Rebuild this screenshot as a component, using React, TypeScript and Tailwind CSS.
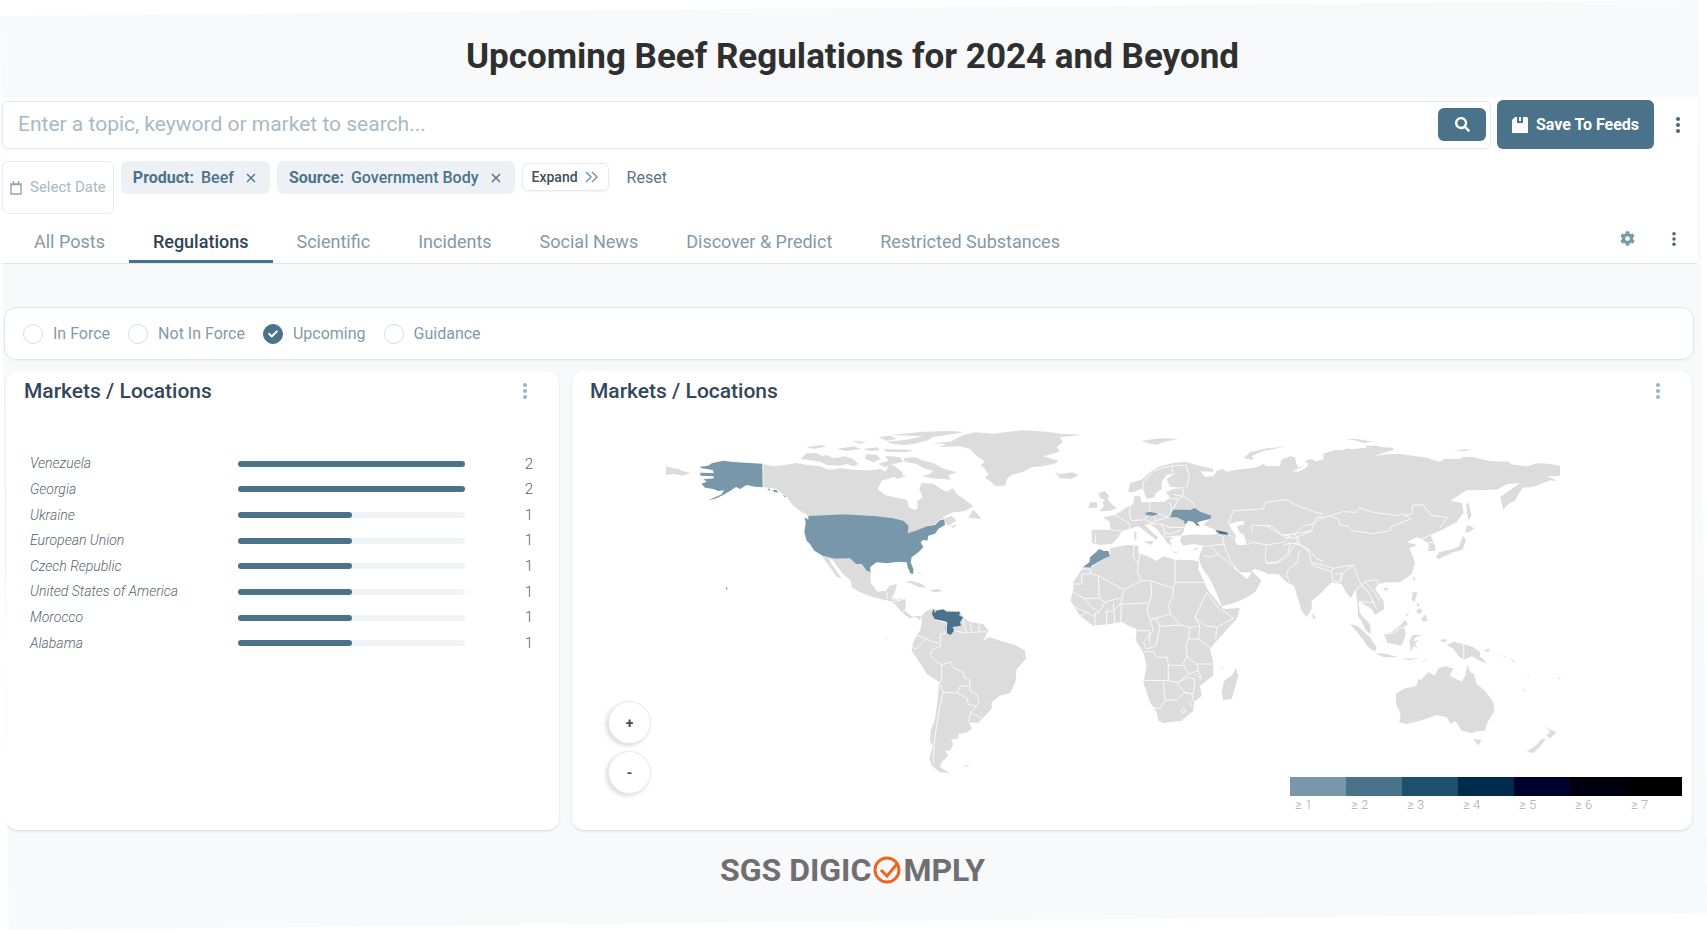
import { FaCheck, FaCog, FaSearch } from "react-icons/fa";

const chips = [
  { name: "Product:", value: "Beef" },
  { name: "Source:", value: "Government Body" },
];

const tabs = [
  "All Posts",
  "Regulations",
  "Scientific",
  "Incidents",
  "Social News",
  "Discover & Predict",
  "Restricted Substances",
];

const statuses = ["In Force", "Not In Force", "Upcoming", "Guidance"];

const markets = [
  { name: "Venezuela", count: 2 },
  { name: "Georgia", count: 2 },
  { name: "Ukraine", count: 1 },
  { name: "European Union", count: 1 },
  { name: "Czech Republic", count: 1 },
  { name: "United States of America", count: 1 },
  { name: "Morocco", count: 1 },
  { name: "Alabama", count: 1 },
];

const legend = [
  { label: "≥ 1", color: "bg-[#7997aa]" },
  { label: "≥ 2", color: "bg-[#4a738b]" },
  { label: "≥ 3", color: "bg-[#1c506d]" },
  { label: "≥ 4", color: "bg-[#002b4d]" },
  { label: "≥ 5", color: "bg-[#00022e]" },
  { label: "≥ 6", color: "bg-[#00000f]" },
  { label: "≥ 7", color: "bg-black" },
];

function Dots({ className }: { className: string }) {
  return (
    <svg viewBox="0 0 4 16" className={className} fill="currentColor">
      <circle cx="2" cy="2" r="2" />
      <circle cx="2" cy="8" r="2" />
      <circle cx="2" cy="14" r="2" />
    </svg>
  );
}

function PageTitle() {
  return (
    <header className="flex h-[97px] items-center justify-center pt-[17px]">
      <h1 className="text-[35px] leading-10 font-bold text-[#2f2f2f]">
        Upcoming Beef Regulations for 2024 and Beyond
      </h1>
    </header>
  );
}

function SearchRow() {
  return (
    <div className="flex items-center pt-[3px]">
      <form className="flex h-12 flex-1 items-center rounded-md border border-[#e3eaf0] pr-1 shadow-xs">
        <input
          type="text"
          aria-label="Search"
          placeholder="Enter a topic, keyword or market to search..."
          className="min-w-0 flex-1 px-[15px] text-[21px] outline-none placeholder:text-[#a9b9c4]"
        />
        <button
          type="button"
          title="Search"
          className="flex h-[33px] w-12 items-center justify-center rounded-md bg-[#4a738b] text-white"
        >
          <FaSearch className="size-[15px]" />
        </button>
      </form>
      <button
        type="button"
        className="ml-[6px] flex h-[49px] w-[157px] items-center justify-center gap-2 rounded-md bg-[#4a738b] text-base font-bold text-white"
      >
        <svg viewBox="0 0 16 16" className="size-4" fill="currentColor">
          <path d="M3 0h2v6h6V0h4l1 1v15H0V3z" />
          <path d="M7 0h2v4H7z" />
        </svg>
        Save To Feeds
      </button>
      <button type="button" title="More" className="mr-[17px] ml-[22px] text-[#4a6478]">
        <Dots className="h-4 w-1" />
      </button>
    </div>
  );
}

function FilterRow() {
  return (
    <div className="flex items-start gap-[7px] pt-3">
      <button
        type="button"
        className="flex h-[53px] items-center gap-2 rounded-md border border-[#e6ecf1] px-[7px] text-[15px] text-[#a9b9c4]"
      >
        <svg
          viewBox="0 0 12 14"
          className="h-[14px] w-3"
          fill="none"
          stroke="#8da3b2"
          strokeWidth="1.4"
        >
          <path d="M1 3h10v10H1zM1 3.6h10M3.5 0v3M8.5 0v3" />
        </svg>
        Select Date
      </button>
      {chips.map((chip) => (
        <div
          key={chip.name}
          className="flex h-[33px] items-center rounded-md bg-[#edf1f5] px-3 text-base text-[#4a738b]"
        >
          <span className="font-bold">{chip.name}</span>
          <span className="ml-[7px] font-medium">{chip.value}</span>
          <button type="button" title="Remove" className="ml-[10px] px-[2px]">
            <svg
              viewBox="0 0 10 10"
              className="size-[10px]"
              stroke="currentColor"
              strokeWidth="1.4"
            >
              <path d="M1 1l8 8M9 1L1 9" />
            </svg>
          </button>
        </div>
      ))}
      <button
        type="button"
        className="mt-[2px] flex h-7 items-center gap-[7px] rounded-md border border-[#e3eaf0] px-[9px] text-sm font-medium text-[#3d5060] shadow-xs"
      >
        Expand
        <svg
          viewBox="0 0 14 12"
          className="h-3 w-[14px]"
          fill="none"
          stroke="#7d98aa"
          strokeWidth="1.5"
        >
          <path d="M1 1l5 5-5 5M7 1l5 5-5 5" />
        </svg>
      </button>
      <button type="button" className="ml-[11px] h-[33px] text-base text-[#5b7485]">
        Reset
      </button>
    </div>
  );
}

function Tabs() {
  return (
    <div className="flex items-center border-b border-[#dfe7ee] pl-2">
      <nav className="flex flex-1">
        {tabs.map((tab) => (
          <a
            key={tab}
            href="#"
            className={
              tab === "Regulations"
                ? "h-[49px] border-b-[3px] border-[#4a738b] px-6 pt-4 text-lg leading-6 font-medium text-[#2f4353]"
                : "h-[49px] px-6 pt-4 text-lg leading-6 text-[#8499a8]"
            }
          >
            {tab}
          </a>
        ))}
      </nav>
      <button type="button" title="Settings" className="text-[#7d98aa]">
        <FaCog className="size-[15px]" />
      </button>
      <button type="button" title="More" className="mr-[21px] ml-[37px] text-[#4a6478]">
        <Dots className="h-[14px] w-1" />
      </button>
    </div>
  );
}

function StatusFilter() {
  return (
    <fieldset className="mr-[11px] ml-1 flex h-[53px] items-center gap-[18px] rounded-xl border border-[#dbe5ed] bg-white px-[18px] shadow-xs">
      {statuses.map((status) => (
        <label
          key={status}
          className="flex items-center gap-[10px] text-base text-[#8499a8]"
        >
          <span className="grid size-5 place-items-center">
            <input
              type="radio"
              name="status"
              defaultChecked={status === "Upcoming"}
              className="peer col-start-1 row-start-1 size-5 appearance-none rounded-full border border-[#d3dde5] checked:border-[#4a738b] checked:bg-[#4a738b]"
            />
            <FaCheck className="pointer-events-none col-start-1 row-start-1 hidden size-[10px] text-white peer-checked:block" />
          </span>
          {status}
        </label>
      ))}
    </fieldset>
  );
}

function CardHeader() {
  return (
    <div className="flex items-center justify-between pr-8 pl-[18px]">
      <h2 className="text-[21px] leading-10 font-medium text-[#33475b]">
        Markets / Locations
      </h2>
      <button type="button" title="More" className="text-[#9db3c2]">
        <Dots className="h-4 w-1" />
      </button>
    </div>
  );
}

function MarketList() {
  return (
    <section className="w-1/3 max-w-[553px] rounded-xl bg-white shadow-sm">
      <CardHeader />
      <ul className="mt-10 grid h-[205px] grid-rows-8 pr-[26px] pl-6">
        {markets.map((market) => (
          <li key={market.name} className="flex items-center text-[14px] text-[#56656f]">
            <span className="w-[208px] font-light italic">{market.name}</span>
            <span className="h-[6px] flex-1 rounded-full bg-[#f0f4f7]">
              <span
                className="block h-[6px] rounded-full bg-[#4a738b]"
                style={{ width: `${(market.count / 2) * 100}%` }}
              />
            </span>
            <span className="w-[68px] text-right text-[15px] font-light">
              {market.count}
            </span>
          </li>
        ))}
      </ul>
    </section>
  );
}

function WorldMap() {
  return (
    <svg viewBox="1716 1236 3360 1098" className="w-full" role="img" aria-label="World map">
      {/* North America */}
      <g transform="translate(1920 1230)" fill="#dcdcdc">
        <path d="M78 172L100 178L118 180L125 186L150 190L130 200L100 195L78 198Z" />
        <path d="M370 166L400 172L435 168L470 162L500 168L540 172L565 182L600 178L640 182L690 184L720 180L738 188L745 170L760 168L775 180L790 192L785 200L760 204L725 215L713 240L735 258L770 266L800 272L808 296L825 304L833 296L832 275L848 265L842 250L838 240L845 222L880 224L900 238L920 248L938 238L950 255L965 265L985 280L1000 292L975 306L940 310L920 318L900 332L885 346L860 352L835 362L803 373L806 350L790 335L760 328L712 322L610 316L505 321L480 305L460 290L440 265L410 240L385 236L370 235Z" />
        <path d="M905 330L935 320L950 335L925 350L916 342ZM985 325L1000 302L1015 318L1024 330L1000 328ZM930 352L955 346L938 357Z" />
        <path d="M790 148L825 145L850 155L880 162L905 176L935 185L952 190L925 198L932 212L905 210L875 208L845 200L870 195L880 185L850 178L830 165L795 158Z" />
        <path d="M482 150L500 133L530 132L545 140L560 138L580 148L615 142L640 150L655 165L640 172L620 165L600 170L560 168L540 158L505 153Z" />
        <path d="M500 115L540 108L562 112L520 120ZM590 120L640 112L665 120L620 126ZM635 95L680 99L660 104ZM715 84L750 80L770 90L740 95ZM740 98L800 92L850 82L820 80L750 78L850 68L930 66L975 69L920 78L880 84L860 95L820 105L790 108L760 105ZM670 120L712 115L720 124L690 126ZM680 135L710 138L722 150L700 160L675 150ZM730 120L820 122L800 130L740 128ZM735 140L780 145L790 158L760 165L735 175L715 165L745 155ZM755 195L800 200L770 210ZM835 494l10 -2l-4 4z" />
        <path d="M548 440L585 449L630 448L648 465L665 465L680 485L692 490L692 520L712 548L738 545L748 530L772 525L762 545L745 555L733 572L700 565L660 550L635 535L632 515L605 490L580 455L566 447L575 466L604 508L590 503L570 475L548 445Z" />
        <g fill="#7997aa">
          <path d="M179 173L205 170L215 163L250 155L280 159L367 164L368 235L345 233L320 228L300 240L288 234L270 246L250 258L225 269L205 274L245 256L252 244L235 246L220 240L195 236L184 224L200 218L190 211L222 208L220 202L182 200L180 191L222 192L218 183L185 178Z" />
          <path d="M505 321L610 316L712 322L760 328L790 335L806 350L803 373L835 362L860 352L885 348L900 334L912 332L915 347L895 360L885 374L865 380L862 395L850 392L842 400L850 415L835 430L815 445L812 460L820 480L820 494L812 494L803 475L800 460L775 458L740 463L710 460L690 475L692 490L680 485L665 465L648 465L630 448L585 449L548 440L523 425L510 405L500 395L493 370L497 340L493 325L505 332Z" />
          <path d="M382 237l8 4l-2 6zM396 243l14 0l4 8l-10 -2zM428 257l10 6l-4 2zM257 534l6 4l-4 5z" />
        </g>
      </g>

      {/* Greenland and Iceland */}
      <g transform="translate(2580 1260)" fill="#dcdcdc">
        <path d="M215 73L270 68L310 48L345 40L400 44L485 34L560 38L600 44L665 47L600 55L608 70L590 85L600 97L575 105L550 112L595 125L585 134L545 142L515 145L490 158L455 168L440 180L435 200L405 200L390 185L375 178L385 165L375 150L362 138L375 128L350 110L330 90L300 82L235 84L260 76Z" />
        <path d="M585 160L600 166L635 160L655 168L635 179L600 178Z" />
      </g>

      {/* Central and South America */}
      <g transform="translate(2640 1680)" fill="#dcdcdc">
        <path d="M0 100L20 98L40 78L50 76L45 100L35 115L50 122L75 118L78 130L75 155L95 172L125 170L120 182L105 174L88 178L65 160L40 130L0 118Z" />
        <path d="M72 70L95 65L125 75L140 86L115 84L90 72ZM150 92L175 90L188 97L160 100ZM245 620L270 619L258 624ZM15 236l6 3l-4 3z" />
        <path d="M125 170L140 155L160 150L180 152L240 158L250 175L270 190L310 195L325 215L310 245L325 234L345 240L375 250L405 258L435 275L438 300L410 330L406 370L390 403L360 410L335 430L335 450L305 480L295 492L268 490L275 510L262 520L235 525L235 538L213 542L220 555L210 575L195 575L205 590L185 610L180 625L210 642L180 640L155 620L148 600L158 560L150 545L152 515L165 480L172 430L178 370L140 345L125 320L95 275L98 255L110 230L120 215L125 195Z" />
        <path
          fill="#4a738b"
          d="M160 150L166 163L168 155L190 151L200 158L240 158L238 170L250 175L240 190L243 200L218 204L222 215L212 228L200 222L196 205L202 192L190 186L165 182L156 165Z"
        />
        <path
          fill="none"
          stroke="#fafafa"
          strokeWidth="3"
          d="M165 182L200 190L198 222L180 225L182 262L155 272L150 290L165 305L185 318L212 308L218 325L250 340L253 355L268 362L270 380L240 382L232 402L262 418L265 437L290 440L298 430L290 405L270 395V380M112 230L138 238L108 270L98 265M138 238L155 248L178 252M185 318L185 365L178 370L190 400L232 402M190 400L178 450L170 500L162 560L160 610M290 440L272 460L265 490M272 460L304 478M250 175L252 200L260 222L275 220L272 195M275 220L318 218M298 195L296 218M222 215L258 222M20 98L22 120M35 115L45 128L75 120M75 155L65 160M102 168V180"
        />
      </g>

      {/* Europe and western Asia */}
      <g transform="translate(3150 1230)" fill="#dcdcdc">
        <path d="M235 250L240 222L275 212L300 190L330 172L370 162L405 158L440 168L490 180L490 188L450 187L465 203L490 202L500 186L520 180L530 188L560 182L620 175L640 165L650 172L690 170L694 152L720 142L735 145L738 162L745 175L765 172L740 181L725 186L745 188L768 176L775 165L765 155L785 150L800 158L810 152L838 155L815 148L840 142L850 128L900 118L900 500L660 495L615 480L600 490L570 490L545 460L555 480L590 510L600 500L605 485L635 515L615 550L590 565L560 580L515 592L505 565L480 510L455 475L447 450L452 430L460 410L430 405L400 410L390 395L395 380L430 376L465 378L500 376L495 362L460 348L485 325L455 332L445 345L415 335L405 350L400 370L390 382L372 382L360 392L365 412L350 400L340 385L320 360L300 345L285 348L305 368L325 385L318 392L300 378L275 358L262 352L240 360L215 365L205 385L185 405L150 408L125 402L125 362L180 362L180 340L160 325L195 318L230 295L250 285L252 262L270 260L275 280L300 280L345 278L360 265L348 250L370 240L412 236L360 234L350 210L375 192L350 198L335 220L335 240L318 252L312 265L290 270L278 238L250 250Z" />
        <path d="M580 148L600 130L650 118L705 113L640 126L605 142L612 153ZM275 95L330 88L385 90L345 98L318 108L295 103ZM145 252L165 246L178 262L172 270L185 285L200 298L180 305L148 307L162 292L158 278L165 272L150 266ZM115 298L120 280L142 280L142 296ZM253 368h6v24h-6zM280 398L310 395L305 408ZM362 428h22l-4 4zM430 420L446 414L438 423ZM65 474l6 -2l-2 3z" />
        <path
          fill="#fff"
          d="M537 345L560 338L583 336L582 346L560 352L570 372L580 375L590 400L585 408L563 408L554 395L558 380L545 362Z"
        />
        <g fill="#7997aa">
          <path d="M370 302L400 302L420 303L435 297L450 308L485 320L480 330L455 336L440 340L450 350L440 350L430 338L415 335L405 347L402 335L380 325L358 325Z" />
          <path d="M285 312L300 308L325 314L310 320L290 318Z" />
          <path d="M148 420L162 426L175 425L180 442L160 450L125 470L122 476L98 475L118 460L120 445L135 432Z" />
        </g>
        <path fill="#4a738b" d="M495 363L530 370L536 377L510 375Z" />
        <path
          fill="none"
          stroke="#fafafa"
          strokeWidth="3"
          d="M278 238L282 215L310 188L340 175L375 170L408 168L418 205L410 236M366 172L368 190M400 240L398 262L370 256M348 268L385 270L400 262L428 280L435 297M385 270L370 300M358 278L365 295L360 322M298 282L300 308M325 314L358 325M195 318L240 345L238 360M240 290L238 315L245 335L285 332L290 320M310 320L318 335L300 345M318 335L352 325M285 332L310 345L335 345L345 372L360 375L395 362M335 345L358 355L402 355M345 372L338 385M345 385L388 380M180 362L212 366M138 372L135 402M497 364L450 345M535 377L550 385M510 378L520 385L522 405L480 410L460 412M522 405L528 425L545 460M480 410L505 435L480 445L460 440M505 435L545 468M535 345L550 305L640 300L645 280L710 272L730 285L790 308L840 320L870 315L900 322M590 408L610 400L650 408L700 400L720 382L690 375L650 350L605 348L606 370M645 350L665 350L695 378L735 375L760 350L790 345L800 325L840 320M650 408L645 440L650 462L690 458L715 440L725 420L740 405M735 375L745 395L740 405L775 420L800 450L860 470M125 475L125 485"
        />
      </g>

      {/* Africa */}
      <g transform="translate(3150 1590)" fill="#dcdcdc">
        <path d="M180 58L230 48L265 50L265 72L300 85L320 96L340 82L375 92L430 94L447 98L445 120L475 185L520 240L570 237L560 270L500 335L480 360L490 400L490 440L450 470L455 500L432 520L430 545L395 575L340 582L325 575L320 550L300 520L280 460L290 410L280 370L258 335L260 300L235 290L215 278L180 285L130 290L90 260L62 215L70 180L70 160L98 118L122 116L160 90L180 82Z" />
        <path d="M558 418L565 440L545 510L520 513L515 490L522 455L545 440ZM510 412l12 8l-6 0zM240 322l5 0l-3 6z" />
        <path
          fill="none"
          stroke="#fafafa"
          strokeWidth="3"
          d="M95 120H122V135H95V165H70M122 135L145 140L220 182L275 155L262 130L265 105L250 85L252 50M265 105L270 68M145 140L148 208H102L70 190M148 208L165 220L148 248L125 235L102 208M220 182L218 205L165 220M218 205L210 225L298 222L305 195L302 155L275 155M302 155L370 178L375 160V92M375 160H465M370 178L368 205L355 230L362 255L300 272L290 240L298 222M362 255L390 288L330 292L318 268L300 272L310 305L280 340L290 360L318 350L330 292M262 305L300 305L298 345M215 225L212 278M190 222L195 282M170 245V285M135 250V290M165 250L190 245M148 248L130 262L110 250L75 235M90 262L112 248M210 225L190 245M390 288L420 295L450 292L435 265L470 190L500 230L510 242M435 265L465 290L500 295L550 268L515 242M500 295L497 330M450 292L445 330L485 360M445 330H415L420 295M415 330L408 350L412 385L440 405L490 405M440 405L445 425L415 435L400 405L408 385L412 385M283 368H312L318 385H352L355 408L400 410M355 408V455L280 454M355 455L385 460L415 435M445 425L455 450L435 435M340 460L345 515L330 538L305 535M345 515L380 512L405 490L380 462M405 490L430 495L435 450L415 445L385 460M405 490L425 495L432 520M425 515L418 525L428 530M392 545L402 538L408 546L398 553Z"
        />
      </g>

      {/* Asia */}
      <g transform="translate(3720 1260)" fill="#dcdcdc">
        <path d="M250 104L280 94L320 92L340 90L380 86L375 80L410 80L430 85L458 86L462 92L430 102L400 112L440 106L480 105L540 113L566 118L575 122L600 128L612 120L660 120L670 114L700 114L730 122L755 127L808 128L812 136L830 138L862 142L890 133L925 134L960 140L960 170L945 172L920 172L955 187L930 184L890 200L870 205L850 205L835 225L825 245L805 255L790 272L780 235L840 192L800 196L770 212L680 214L630 245L665 252L671 280L650 310L600 335L572 350L585 380L585 395L562 397L568 380L560 370L540 358L530 355L500 370L532 378L508 388L525 430L515 465L480 490L440 490L415 495L405 510L430 545L433 570L405 588L395 570L370 555L355 545L362 600L355 590L348 510L332 538L318 520L305 495L275 490L240 525L215 545L215 570L200 595L185 575L162 500L140 490L115 465L80 465L80 440L250 440Z" />
        <path d="M588 415L598 400L640 390L658 382L668 350L678 362L668 392L640 400L596 420ZM675 340L683 318L703 328L690 338ZM678 255L685 252L695 290L685 305ZM518 482L526 470L524 485ZM430 510L446 506L438 517ZM315 60L350 60L400 68L370 72L350 65ZM640 92L700 91L670 97ZM216 582L229 598L219 600Z" />
        <path
          fill="none"
          stroke="#fafafa"
          strokeWidth="3"
          d="M270 290L310 278L350 280L358 266L400 280L475 290L490 282L512 300L455 322L450 335L400 344L335 335L325 322L300 318L295 300L270 290M490 290L515 285L518 258L550 258L575 290L622 295L600 328M545 360L595 338M562 372L585 368M270 290L240 300L220 318L215 335L170 355L180 375L205 395L215 430L280 448L340 438L345 455L365 500L375 488L410 482L415 495M180 375L150 372L145 400L110 432L78 434M150 372L130 378M178 395L172 430L145 450L140 470L150 490M215 430L220 440L275 458L280 448M275 458L278 485L300 490L310 460L340 438M285 465L305 462L300 490M348 510L365 500L385 518L400 550L410 570M375 488L395 510L420 545M360 548L385 550L405 550M130 350L215 335M130 355L175 358M205 395L190 385"
        />
      </g>

      {/* South-east Asia and Oceania */}
      <g transform="translate(3960 1740)" fill="#dcdcdc">
        <path d="M228 345L250 330L290 320L295 300L302 304L325 280L345 290L355 268L375 262L400 268L390 290L425 308L435 290L442 258L452 280L462 285L470 315L495 335L520 370L523 395L500 435L495 455L465 458L455 463L425 455L412 435L405 425L392 435L380 415L350 408L300 425L260 435L238 430L242 405L228 375Z" />
        <path d="M460 480L485 482L475 500ZM668 430L685 450L710 460L690 478L678 470L690 460ZM678 480L660 502L640 522L620 518L650 497L665 480Z" />
        <path d="M115 95L130 115L150 135L153 165L138 155L125 125L114 112ZM90 135L112 140L150 175L170 205L165 218L145 205L120 170ZM168 222L200 225L235 235L190 235ZM192 165L215 160L240 140L255 123L264 135L252 145L258 165L245 200L202 192ZM268 186L278 168L308 168L284 176L280 186L296 183L285 192L292 210L280 198L276 216L272 212ZM278 40L292 38L288 55L284 70L275 62ZM288 72L300 76L294 84ZM288 95L300 88L308 98L295 105ZM305 118L318 105L322 125L308 128ZM256 110L270 95L262 110ZM360 182L378 180L380 188L365 190ZM380 198L400 188L430 195L460 205L480 220L480 232L502 252L485 248L455 232L432 242L415 230L398 208ZM490 216L512 208L505 218ZM240 240L300 238L270 243ZM302 250L325 238L315 246ZM545 226L560 236L552 234ZM570 238L588 250L578 248ZM602 324L622 340L612 336ZM622 286L628 295L624 294ZM710 299l12 -4l-2 5zM190 28L205 26L197 36Z" />
        <path
          fill="none"
          stroke="#fafafa"
          strokeWidth="3"
          d="M431 190V244M196 166L222 162L240 148L252 145"
        />
      </g>
    </svg>
  );
}

function MapCard() {
  return (
    <section className="relative min-w-0 flex-1 rounded-xl bg-white pb-4 shadow-sm">
      <CardHeader />
      <WorldMap />
      <div className="flex justify-end pr-[10px]">
        {legend.map((item) => (
          <div key={item.label} className="w-14">
            <div className={`h-[19px] ${item.color}`} />
            <p className="pl-[5px] text-[13px] leading-[18px] font-light text-[#a9a9a9]">
              {item.label}
            </p>
          </div>
        ))}
      </div>
      {/* zoom controls sit on top of the map */}
      <div className="absolute bottom-9 left-9 flex flex-col gap-[7px]">
        {["+", "-"].map((sign) => (
          <button
            key={sign}
            type="button"
            className="size-[43px] rounded-full border border-[#e3eaf0] bg-white text-sm font-bold text-[#3d5060] shadow-[-2px_2px_4px_rgba(0,0,0,0.15)]"
          >
            {sign}
          </button>
        ))}
      </div>
    </section>
  );
}

function Logo() {
  return (
    <footer className="flex items-center justify-center pt-5 text-[32px] leading-10 font-bold text-[#706e6f]">
      <span>SGS DIGIC</span>
      <svg
        viewBox="0 0 28 28"
        className="mx-[2px] size-7"
        fill="none"
        stroke="#f26322"
        strokeWidth="3"
      >
        <circle cx="14" cy="14" r="12" />
        <path d="M8 14l6 6L24 8" />
      </svg>
      <span>MPLY</span>
    </footer>
  );
}

export default function App() {
  return (
    <div className="min-h-screen bg-white font-[Roboto,sans-serif]">
      <main className="bg-[#f7f9fb] pr-[2px] pb-10 [clip-path:polygon(0_16px,99.5%_0,100%_98.2%,0.5%_100%)]">
        <PageTitle />
        <div className="mr-2 ml-[2px] bg-white">
          <SearchRow />
          <FilterRow />
          <Tabs />
        </div>
        <div className="pt-[43px]">
          <StatusFilter />
        </div>
        <div className="mt-[11px] mr-[13px] ml-[6px] flex gap-[13px]">
          <MarketList />
          <MapCard />
        </div>
        <Logo />
      </main>
    </div>
  );
}
